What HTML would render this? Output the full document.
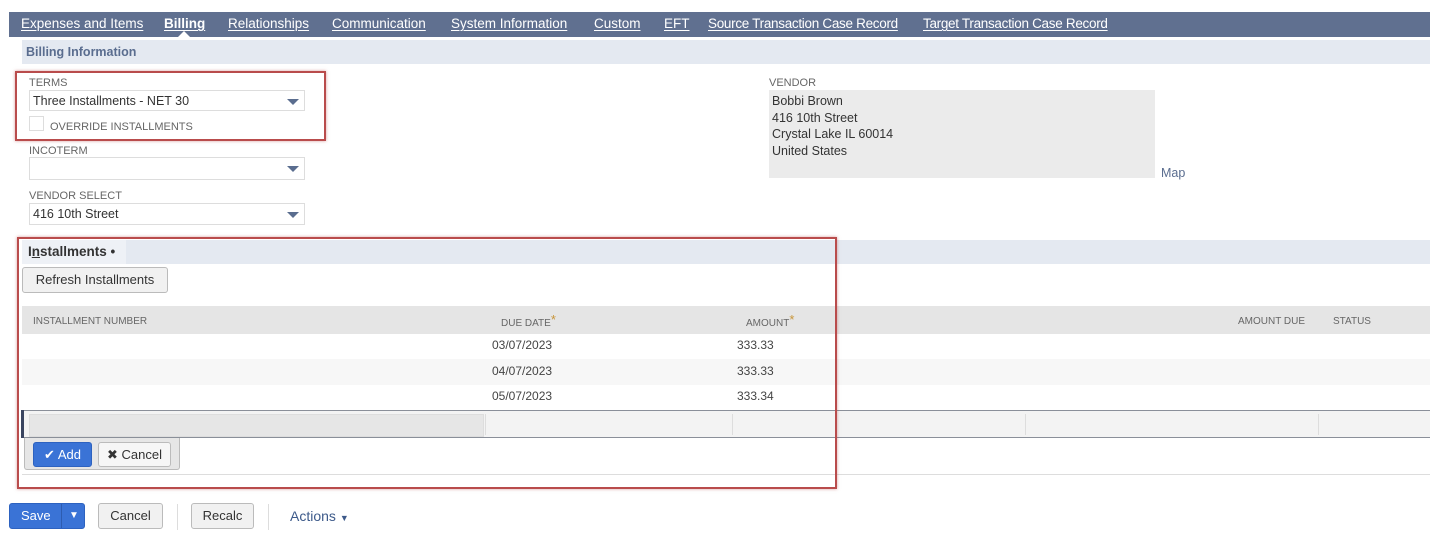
<!DOCTYPE html>
<html><head><style>
body{margin:0;width:1430px;height:538px;background:#fff;font-family:"Liberation Sans",sans-serif;position:relative;overflow:hidden;color:#333}
.a{position:absolute;white-space:nowrap}
.tab{position:absolute;top:16px;color:#fff;font-size:13.5px;text-decoration:underline;text-decoration-thickness:1px;text-underline-offset:2px}
.lbl{position:absolute;font-size:11px;color:#666}
.sel{position:absolute;background:#fff;border:1px solid #ddd;height:21px;font-size:12.5px;line-height:21px;padding-left:3px;box-sizing:border-box;width:276px}
.tri{position:absolute;right:5px;top:8px;width:0;height:0;border-left:6px solid transparent;border-right:6px solid transparent;border-top:6px solid #5a6d8f}
.btn{position:absolute;border:1px solid #bbb;background:#f1f1f1;border-radius:3px;font-size:13px;color:#333;text-align:center;box-sizing:border-box}
.red{position:absolute;border:2px solid #b94c4c;box-shadow:0 0 3px rgba(180,60,60,.5)}
.cell{position:absolute;font-size:12px;color:#444}
.hd{position:absolute;top:316px;font-size:10px;color:#666;line-height:12px}
.st{color:#c8953a;font-size:13px;position:relative;top:-2px}
</style></head><body>
<div class="a" style="left:9px;top:12px;width:1421px;height:25px;background:#607090"></div>
<span class="tab" style="left:21px">Expenses and Items</span>
<span class="tab" style="left:164px;font-weight:bold">Billing</span>
<div class="a" style="left:178px;top:31px;width:0;height:0;border-left:6px solid transparent;border-right:6px solid transparent;border-bottom:6px solid #fff"></div>
<span class="tab" style="left:228px">Relationships</span>
<span class="tab" style="left:332px">Communication</span>
<span class="tab" style="left:451px">System Information</span>
<span class="tab" style="left:594px">Custom</span>
<span class="tab" style="left:664px">EFT</span>
<span class="tab" style="left:708px;letter-spacing:-0.3px">Source Transaction Case Record</span>
<span class="tab" style="left:923px;letter-spacing:-0.3px">Target Transaction Case Record</span>

<div class="a" style="left:22px;top:40px;width:1408px;height:24px;background:#e4e9f1"></div>
<div class="a" style="left:26px;top:45px;font-size:12.5px;font-weight:bold;color:#5a6d8f">Billing Information</div>

<div class="lbl" style="left:29px;top:77px">TERMS</div>
<div class="sel" style="left:29px;top:90px">Three Installments - NET 30<div class="tri"></div></div>
<div class="a" style="left:29px;top:116px;width:15px;height:15px;border:1px solid #ddd;box-sizing:border-box"></div>
<div class="lbl" style="left:50px;top:121px">OVERRIDE INSTALLMENTS</div>
<div class="red" style="left:15px;top:71px;width:307px;height:66px"></div>

<div class="lbl" style="left:29px;top:145px">INCOTERM</div>
<div class="sel" style="left:29px;top:157px;height:23px"><div class="tri"></div></div>
<div class="lbl" style="left:29px;top:190px">VENDOR SELECT</div>
<div class="sel" style="left:29px;top:203px;height:22px">416 10th Street<div class="tri"></div></div>

<div class="lbl" style="left:769px;top:77px">VENDOR</div>
<div class="a" style="left:769px;top:90px;width:386px;height:88px;background:#ebebeb;font-size:12.5px;line-height:16.5px;padding:3px;box-sizing:border-box;color:#333">Bobbi Brown<br>416 10th Street<br>Crystal Lake IL 60014<br>United States</div>
<div class="a" style="left:1161px;top:166px;font-size:12.5px;color:#5a6d8f">Map</div>

<div class="a" style="left:22px;top:240px;width:1408px;height:24px;background:#e4e9f1"></div>
<div class="a" style="left:22px;top:240px;width:104px;height:24px;background:#eef1f6"></div>
<div class="a" style="left:28px;top:244px;font-size:13.5px;font-weight:bold;color:#333">I<u>n</u>stallments •</div>
<div class="btn" style="left:22px;top:267px;width:146px;height:26px;line-height:24px">Refresh Installments</div>

<div class="a" style="left:22px;top:306px;width:1408px;height:28px;background:#e5e5e5"></div>
<div class="hd" style="left:33px">INSTALLMENT NUMBER</div>
<div class="hd" style="left:501px">DUE DATE<span class="st">*</span></div>
<div class="hd" style="left:746px">AMOUNT<span class="st">*</span></div>
<div class="hd" style="left:1238px">AMOUNT DUE</div>
<div class="hd" style="left:1333px">STATUS</div>
<div class="a" style="left:22px;top:359px;width:1408px;height:26px;background:#f7f7f7"></div>
<div class="cell" style="left:492px;top:338px">03/07/2023</div><div class="cell" style="left:737px;top:338px">333.33</div>
<div class="cell" style="left:492px;top:364px">04/07/2023</div><div class="cell" style="left:737px;top:364px">333.33</div>
<div class="cell" style="left:492px;top:389px">05/07/2023</div><div class="cell" style="left:737px;top:389px">333.34</div>

<div class="a" style="left:21px;top:410px;width:1409px;height:28px;border-top:1px solid #8a8f99;border-bottom:1px solid #8a8f99;background:#f3f3f3;box-sizing:border-box"></div>
<div class="a" style="left:21px;top:410px;width:3px;height:28px;background:#3a4560"></div>
<div class="a" style="left:29px;top:414px;width:453px;height:21px;background:#e6e6e6;border:1px solid #ddd"></div>
<div class="a" style="left:485px;top:414px;width:1px;height:21px;background:#ddd"></div>
<div class="a" style="left:732px;top:414px;width:1px;height:21px;background:#ddd"></div>
<div class="a" style="left:1025px;top:414px;width:1px;height:21px;background:#ddd"></div>
<div class="a" style="left:1318px;top:414px;width:1px;height:21px;background:#ddd"></div>
<div class="a" style="left:24px;top:438px;width:156px;height:32px;background:#e6e6e6;border:1px solid #bbb;border-top:none;box-sizing:border-box;border-radius:0 0 3px 3px"></div>
<div class="btn" style="left:33px;top:442px;width:59px;height:25px;background:#3a73d6;border-color:#2d62c0;color:#fff;line-height:23px">✔ Add</div>
<div class="btn" style="left:98px;top:442px;width:73px;height:25px;background:#f6f6f6;line-height:23px">✖ Cancel</div>
<div class="a" style="left:22px;top:474px;width:1408px;height:1px;background:#ddd"></div>
<div class="red" style="left:17px;top:237px;width:816px;height:248px"></div>

<div class="btn" style="left:9px;top:503px;width:76px;height:26px;background:#3a73d6;border-color:#2d62c0;color:#fff;line-height:24px;text-align:left;padding-left:11px">Save<span style="position:absolute;left:51px;top:0;height:24px;border-left:1px solid #2d5cb0;width:24px;text-align:center;font-size:10px">▼</span></div>
<div class="btn" style="left:98px;top:503px;width:65px;height:26px;line-height:24px">Cancel</div>
<div class="a" style="left:177px;top:504px;width:1px;height:26px;background:#ddd"></div>
<div class="btn" style="left:191px;top:503px;width:63px;height:26px;line-height:24px">Recalc</div>
<div class="a" style="left:268px;top:504px;width:1px;height:26px;background:#ddd"></div>
<div class="a" style="left:290px;top:508px;font-size:14px;color:#3d5a8a">Actions <span style="font-size:9px">▼</span></div>
</body></html>
